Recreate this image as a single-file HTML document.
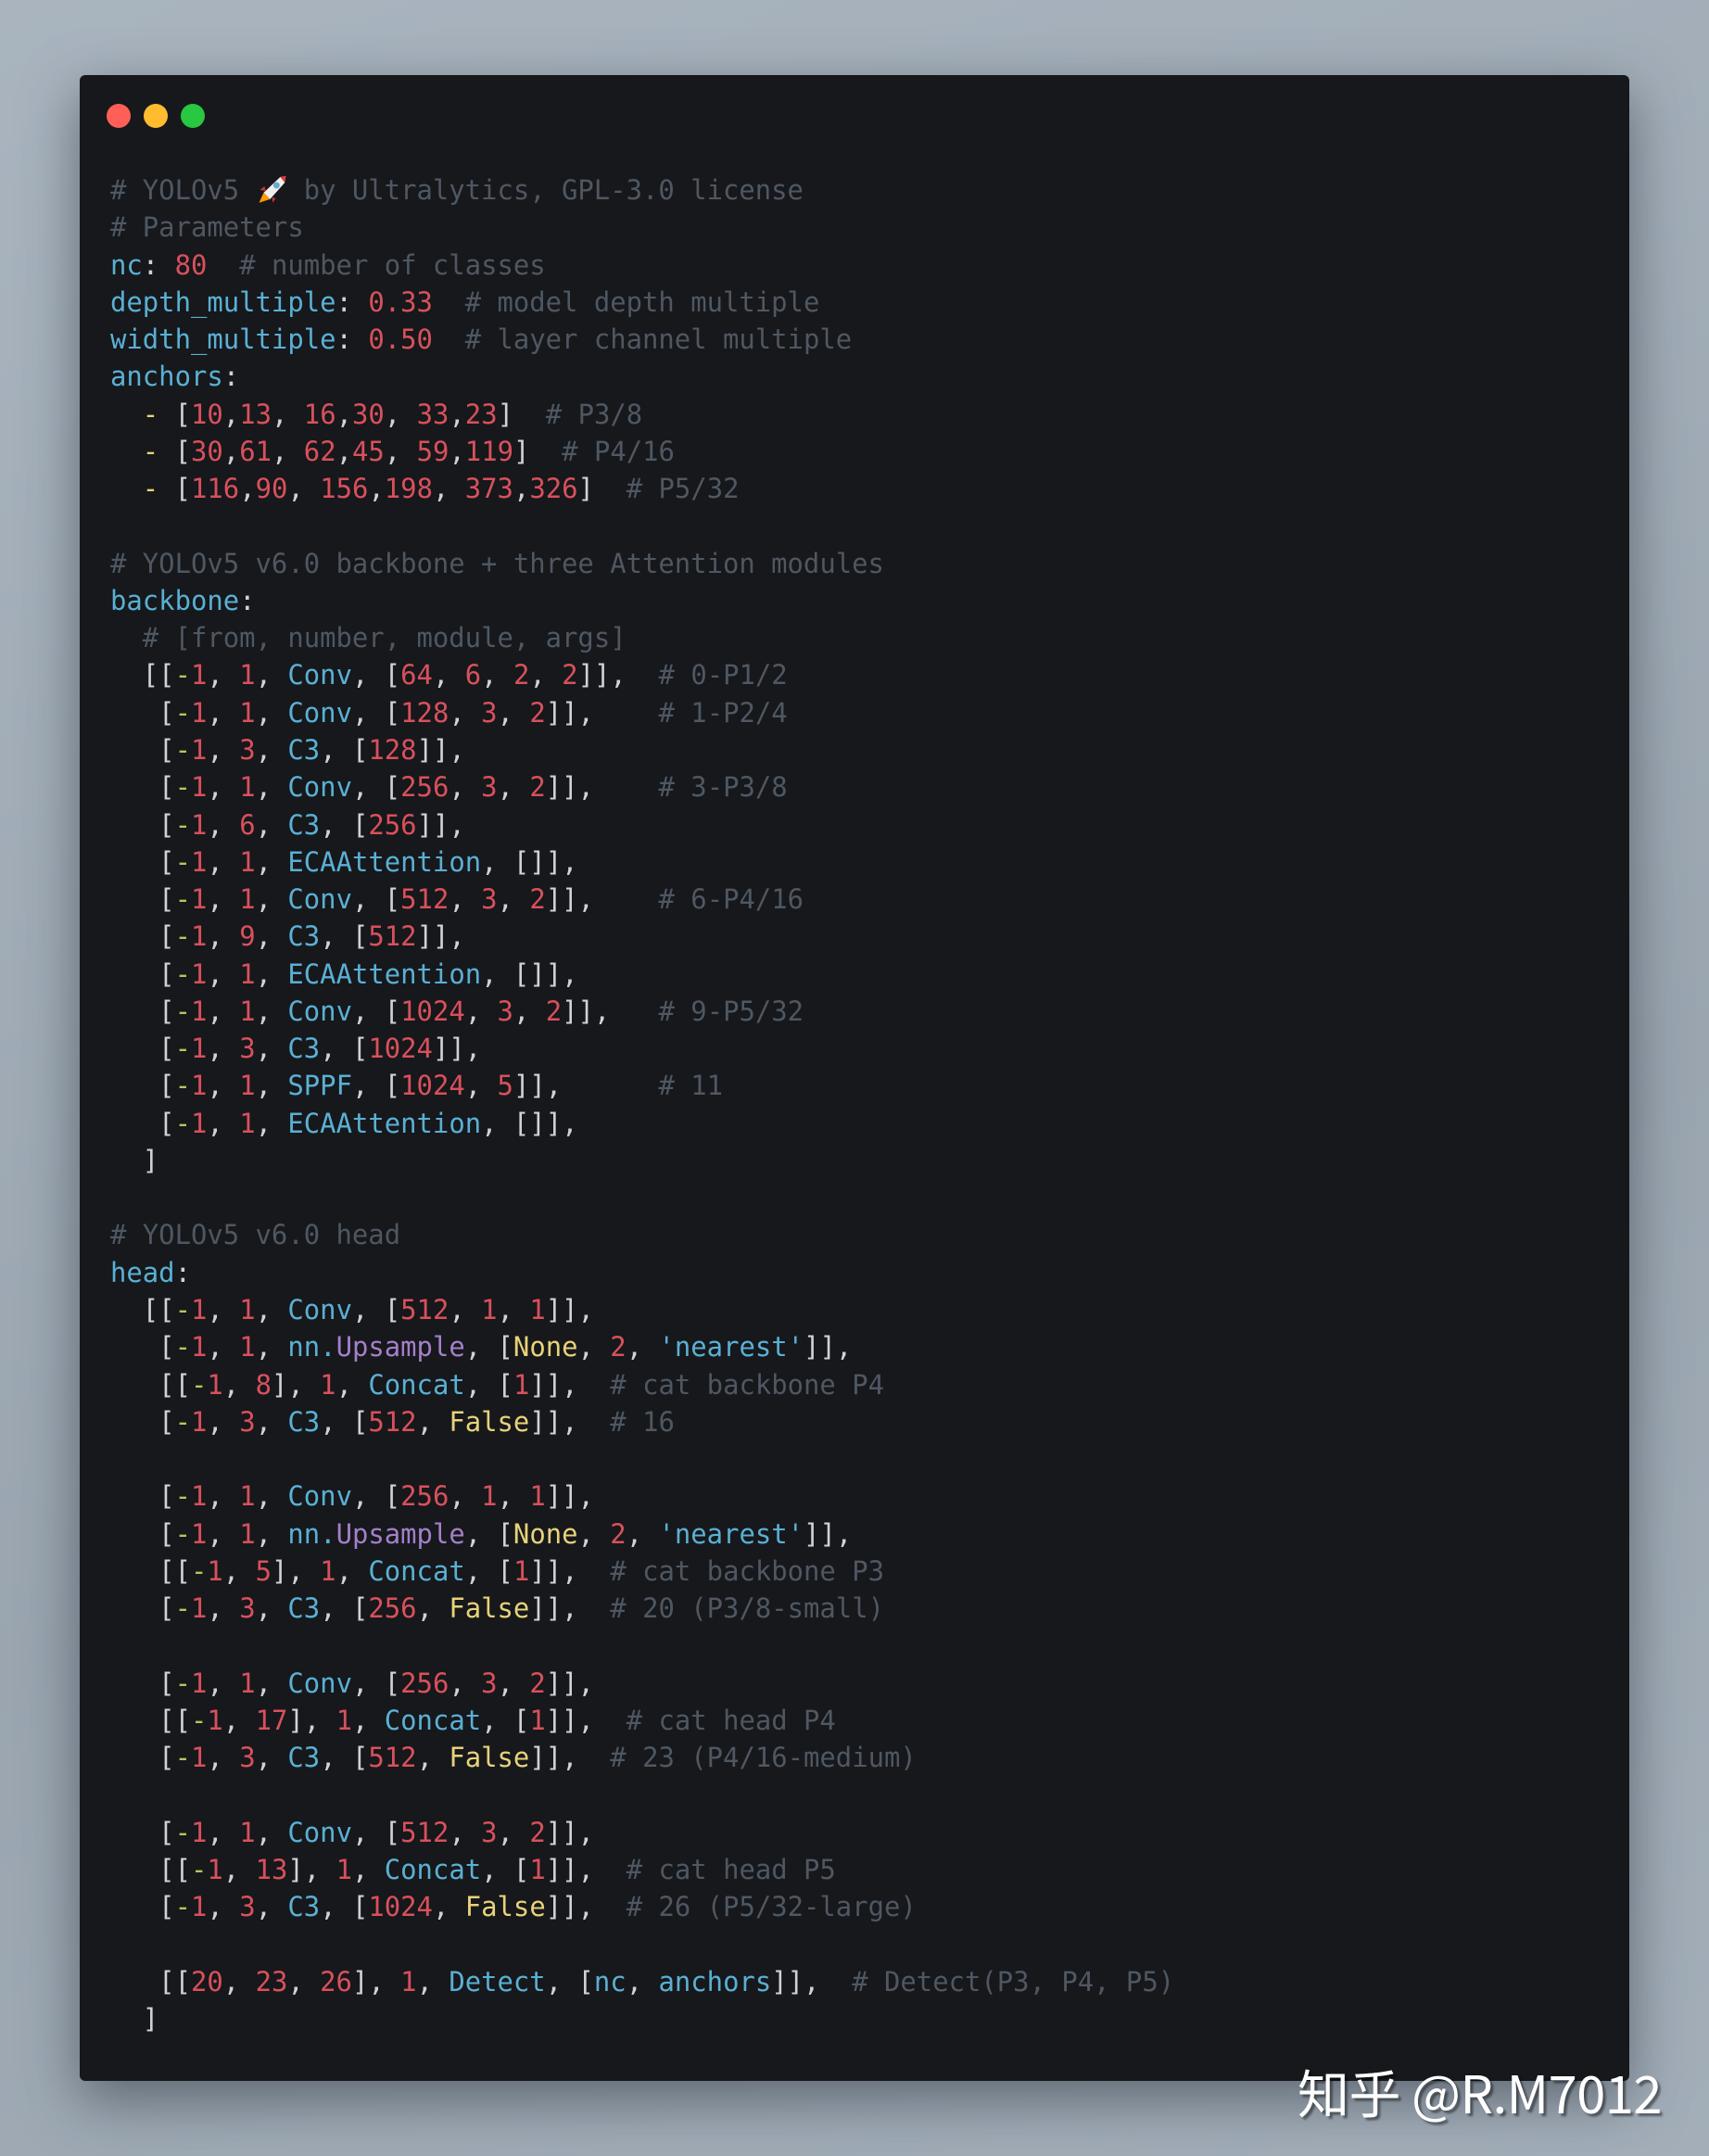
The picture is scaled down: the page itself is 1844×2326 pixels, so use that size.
<!DOCTYPE html>
<html><head><meta charset="utf-8"><style>
html,body{margin:0;padding:0}
body{width:1844px;height:2326px;background:linear-gradient(160deg,#a9b4bf 0%,#9aa5b0 60%,#a3aeb9 100%);position:relative;overflow:hidden}
.win{position:absolute;left:86px;top:81px;width:1672px;height:2164px;background:#16181b;border-radius:6px;box-shadow:0 20px 60px rgba(40,48,58,.55)}
.dot{position:absolute;top:112px;width:26px;height:26px;border-radius:50%}
pre{position:absolute;left:119px;top:185px;margin:0;font-family:"DejaVu Sans Mono","Liberation Mono",monospace;font-size:28.9px;line-height:40.27px;color:#cfd2d6;white-space:pre}
.k{color:#5ab0d4}.n{color:#d9505d}.c{color:#4f5762}.y{color:#e8d27a}.p{color:#a47fc9}.m{color:#b9c45c}
.r{display:inline-block;width:2ch;height:1.1em;vertical-align:-0.2em}
.wm{position:absolute;left:1400px;top:2216px;font-family:"Noto Sans CJK SC","Liberation Sans",sans-serif;font-size:56px;color:#fff;text-shadow:3px 3px 2px rgba(0,0,0,.45);white-space:nowrap;letter-spacing:-0.5px}
</style></head><body>
<div class="win"></div>
<div class="dot" style="left:115px;background:#fe5f57"></div>
<div class="dot" style="left:155px;background:#febc2e"></div>
<div class="dot" style="left:195px;background:#28c840"></div>
<pre><span class="c"># YOLOv5 <svg class="r" viewBox="0 0 34 32"><path d="M26 2 L32 1 L31 8 L15 26 L8 19 Z" fill="#eee"/><path d="M26 2 L32 1 L31 8 Z" fill="#e33"/><circle cx="22" cy="11" r="3.5" fill="#6ac"/><path d="M8 19 L3 30 L15 26 Z" fill="#f90"/><path d="M10 17 L4 16 L9 12 Z M17 24 L18 30 L21 25 Z" fill="#c33"/></svg> by Ultralytics, GPL-3.0 license</span>
<span class="c"># Parameters</span>
<span class="k">nc</span>: <span class="n">80</span>  <span class="c"># number of classes</span>
<span class="k">depth_multiple</span>: <span class="n">0.33</span>  <span class="c"># model depth multiple</span>
<span class="k">width_multiple</span>: <span class="n">0.50</span>  <span class="c"># layer channel multiple</span>
<span class="k">anchors</span>:
  <span class="y">-</span> [<span class="n">10</span>,<span class="n">13</span>, <span class="n">16</span>,<span class="n">30</span>, <span class="n">33</span>,<span class="n">23</span>]  <span class="c"># P3/8</span>
  <span class="y">-</span> [<span class="n">30</span>,<span class="n">61</span>, <span class="n">62</span>,<span class="n">45</span>, <span class="n">59</span>,<span class="n">119</span>]  <span class="c"># P4/16</span>
  <span class="y">-</span> [<span class="n">116</span>,<span class="n">90</span>, <span class="n">156</span>,<span class="n">198</span>, <span class="n">373</span>,<span class="n">326</span>]  <span class="c"># P5/32</span>

<span class="c"># YOLOv5 v6.0 backbone + three Attention modules</span>
<span class="k">backbone</span>:
  <span class="c"># [from, number, module, args]</span>
  [[<span class="m">-</span><span class="n">1</span>, <span class="n">1</span>, <span class="k">Conv</span>, [<span class="n">64</span>, <span class="n">6</span>, <span class="n">2</span>, <span class="n">2</span>]],  <span class="c"># 0-P1/2</span>
   [<span class="m">-</span><span class="n">1</span>, <span class="n">1</span>, <span class="k">Conv</span>, [<span class="n">128</span>, <span class="n">3</span>, <span class="n">2</span>]],    <span class="c"># 1-P2/4</span>
   [<span class="m">-</span><span class="n">1</span>, <span class="n">3</span>, <span class="k">C3</span>, [<span class="n">128</span>]],
   [<span class="m">-</span><span class="n">1</span>, <span class="n">1</span>, <span class="k">Conv</span>, [<span class="n">256</span>, <span class="n">3</span>, <span class="n">2</span>]],    <span class="c"># 3-P3/8</span>
   [<span class="m">-</span><span class="n">1</span>, <span class="n">6</span>, <span class="k">C3</span>, [<span class="n">256</span>]],
   [<span class="m">-</span><span class="n">1</span>, <span class="n">1</span>, <span class="k">ECAAttention</span>, []],
   [<span class="m">-</span><span class="n">1</span>, <span class="n">1</span>, <span class="k">Conv</span>, [<span class="n">512</span>, <span class="n">3</span>, <span class="n">2</span>]],    <span class="c"># 6-P4/16</span>
   [<span class="m">-</span><span class="n">1</span>, <span class="n">9</span>, <span class="k">C3</span>, [<span class="n">512</span>]],
   [<span class="m">-</span><span class="n">1</span>, <span class="n">1</span>, <span class="k">ECAAttention</span>, []],
   [<span class="m">-</span><span class="n">1</span>, <span class="n">1</span>, <span class="k">Conv</span>, [<span class="n">1024</span>, <span class="n">3</span>, <span class="n">2</span>]],   <span class="c"># 9-P5/32</span>
   [<span class="m">-</span><span class="n">1</span>, <span class="n">3</span>, <span class="k">C3</span>, [<span class="n">1024</span>]],
   [<span class="m">-</span><span class="n">1</span>, <span class="n">1</span>, <span class="k">SPPF</span>, [<span class="n">1024</span>, <span class="n">5</span>]],      <span class="c"># 11</span>
   [<span class="m">-</span><span class="n">1</span>, <span class="n">1</span>, <span class="k">ECAAttention</span>, []],
  ]

<span class="c"># YOLOv5 v6.0 head</span>
<span class="k">head</span>:
  [[<span class="m">-</span><span class="n">1</span>, <span class="n">1</span>, <span class="k">Conv</span>, [<span class="n">512</span>, <span class="n">1</span>, <span class="n">1</span>]],
   [<span class="m">-</span><span class="n">1</span>, <span class="n">1</span>, <span class="k">nn.</span><span class="p">Upsample</span>, [<span class="y">None</span>, <span class="n">2</span>, <span class="k">'nearest'</span>]],
   [[<span class="m">-</span><span class="n">1</span>, <span class="n">8</span>], <span class="n">1</span>, <span class="k">Concat</span>, [<span class="n">1</span>]],  <span class="c"># cat backbone P4</span>
   [<span class="m">-</span><span class="n">1</span>, <span class="n">3</span>, <span class="k">C3</span>, [<span class="n">512</span>, <span class="y">False</span>]],  <span class="c"># 16</span>

   [<span class="m">-</span><span class="n">1</span>, <span class="n">1</span>, <span class="k">Conv</span>, [<span class="n">256</span>, <span class="n">1</span>, <span class="n">1</span>]],
   [<span class="m">-</span><span class="n">1</span>, <span class="n">1</span>, <span class="k">nn.</span><span class="p">Upsample</span>, [<span class="y">None</span>, <span class="n">2</span>, <span class="k">'nearest'</span>]],
   [[<span class="m">-</span><span class="n">1</span>, <span class="n">5</span>], <span class="n">1</span>, <span class="k">Concat</span>, [<span class="n">1</span>]],  <span class="c"># cat backbone P3</span>
   [<span class="m">-</span><span class="n">1</span>, <span class="n">3</span>, <span class="k">C3</span>, [<span class="n">256</span>, <span class="y">False</span>]],  <span class="c"># 20 (P3/8-small)</span>

   [<span class="m">-</span><span class="n">1</span>, <span class="n">1</span>, <span class="k">Conv</span>, [<span class="n">256</span>, <span class="n">3</span>, <span class="n">2</span>]],
   [[<span class="m">-</span><span class="n">1</span>, <span class="n">17</span>], <span class="n">1</span>, <span class="k">Concat</span>, [<span class="n">1</span>]],  <span class="c"># cat head P4</span>
   [<span class="m">-</span><span class="n">1</span>, <span class="n">3</span>, <span class="k">C3</span>, [<span class="n">512</span>, <span class="y">False</span>]],  <span class="c"># 23 (P4/16-medium)</span>

   [<span class="m">-</span><span class="n">1</span>, <span class="n">1</span>, <span class="k">Conv</span>, [<span class="n">512</span>, <span class="n">3</span>, <span class="n">2</span>]],
   [[<span class="m">-</span><span class="n">1</span>, <span class="n">13</span>], <span class="n">1</span>, <span class="k">Concat</span>, [<span class="n">1</span>]],  <span class="c"># cat head P5</span>
   [<span class="m">-</span><span class="n">1</span>, <span class="n">3</span>, <span class="k">C3</span>, [<span class="n">1024</span>, <span class="y">False</span>]],  <span class="c"># 26 (P5/32-large)</span>

   [[<span class="n">20</span>, <span class="n">23</span>, <span class="n">26</span>], <span class="n">1</span>, <span class="k">Detect</span>, [<span class="k">nc</span>, <span class="k">anchors</span>]],  <span class="c"># Detect(P3, P4, P5)</span>
  ]</pre>
<div class="wm">知乎 @R.M7012</div>
</body></html>
